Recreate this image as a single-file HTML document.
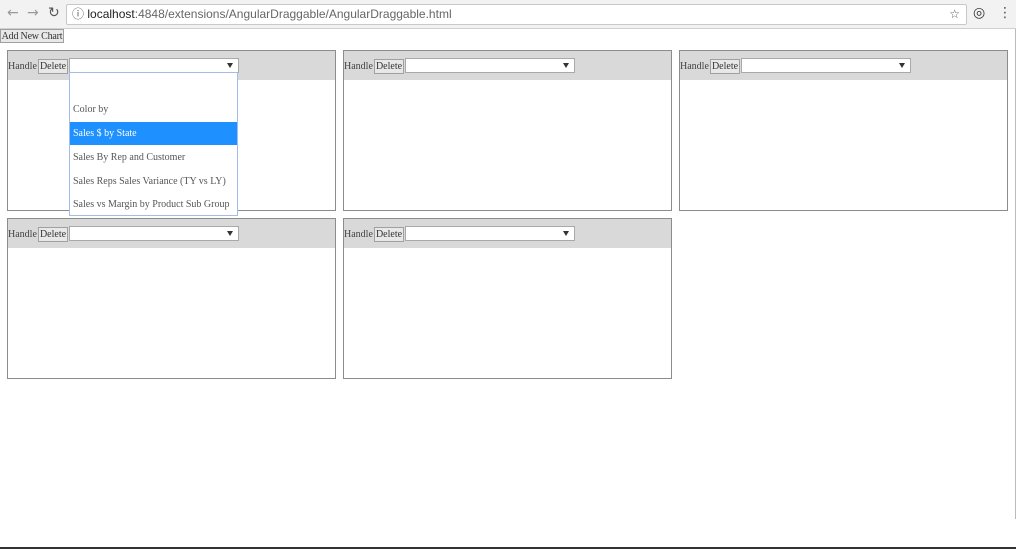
<!DOCTYPE html>
<html><head><style>
body{margin:0;width:1024px;height:554px;background:#fff;position:relative;overflow:hidden;font-family:"Liberation Serif",serif;}
.tb{position:absolute;left:0;top:0;width:1016px;height:28px;background:#f2f2f2;border-bottom:1px solid #d0d0d0;}
.addr{position:absolute;left:66px;top:4px;width:899px;height:19px;background:#fff;border:1px solid #c8c8c8;border-radius:2px;font-family:"Liberation Sans",sans-serif;font-size:12px;line-height:19px;color:#666;}
.ic{position:absolute;font-family:"DejaVu Sans",sans-serif;color:#999;font-size:14px;top:5px;}
.btn{position:absolute;border:1px solid #a0a0a0;background:#e8e8e8;font-size:10px;color:#333;line-height:13px;padding:0;text-align:center;box-sizing:border-box;white-space:nowrap;overflow:hidden;}
.p{position:absolute;width:329px;height:161px;border:1px solid #8c8c8c;box-sizing:border-box;background:#fff;}
.h{position:absolute;left:0;top:0;width:100%;height:29px;background:#d9d9d9;}
.h span{position:absolute;left:0;top:10px;font-size:10px;color:#444;}
.sel{position:absolute;left:61px;top:7px;width:170px;height:15px;border:1px solid #a9a9a9;background:#fff;box-sizing:border-box;}
.sel:after{content:"";position:absolute;right:5px;top:4px;border-left:3px solid transparent;border-right:3px solid transparent;border-top:5px solid #333;}
.dd{position:absolute;left:69px;top:72px;width:169px;height:144px;border:1px solid #a4bde8;box-sizing:border-box;background:#fff;font-size:10px;color:#555;}
.dd div{position:absolute;left:0;width:100%;height:23px;line-height:23px;padding-left:3px;box-sizing:border-box;}
</style></head><body>
<div class="tb">
<span class="ic" style="left:7px">←</span><span class="ic" style="left:27px">→</span><span class="ic" style="left:48px;color:#555">↻</span>
<div class="addr"><span style="margin-left:5px;color:#555">ⓘ</span> <span style="color:#222">localhost</span>:4848/extensions/AngularDraggable/AngularDraggable.html<span style="position:absolute;right:6px;color:#555">☆</span></div>
<span class="ic" style="left:973px;color:#333;font-weight:bold">◎</span><span class="ic" style="left:998px;color:#555">⋮</span>
</div>
<div style="position:absolute;left:1015px;top:29px;width:1px;height:490px;background:#bbb"></div>
<div style="position:absolute;left:0;top:547px;width:1016px;height:2px;background:#333"></div>
<div class="btn" style="left:0;top:29px;height:14px;width:64px;letter-spacing:-0.2px">Add New Chart</div>

<div class="p" style="left:7px;top:50px"><div class="h"><span>Handle</span></div><div class="btn" style="left:30px;top:8px;width:30px;height:15px">Delete</div><div class="sel"></div></div>
<div class="p" style="left:343px;top:50px"><div class="h"><span>Handle</span></div><div class="btn" style="left:30px;top:8px;width:30px;height:15px">Delete</div><div class="sel"></div></div>
<div class="p" style="left:679px;top:50px"><div class="h"><span>Handle</span></div><div class="btn" style="left:30px;top:8px;width:30px;height:15px">Delete</div><div class="sel"></div></div>
<div class="p" style="left:7px;top:218px"><div class="h"><span>Handle</span></div><div class="btn" style="left:30px;top:8px;width:30px;height:15px">Delete</div><div class="sel"></div></div>
<div class="p" style="left:343px;top:218px"><div class="h"><span>Handle</span></div><div class="btn" style="left:30px;top:8px;width:30px;height:15px">Delete</div><div class="sel"></div></div>

<div class="dd">
<div style="top:25px">Color by</div>
<div style="top:49px;background:#1e90ff;color:#fff">Sales $ by State</div>
<div style="top:73px">Sales By Rep and Customer</div>
<div style="top:97px">Sales Reps Sales Variance (TY vs LY)</div>
<div style="top:120px">Sales vs Margin by Product Sub Group</div>
</div>
</body></html>
